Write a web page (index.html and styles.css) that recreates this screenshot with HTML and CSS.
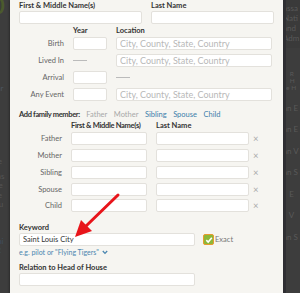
FILE: index.html
```html
<!DOCTYPE html>
<html>
<head>
<meta charset="utf-8">
<link rel="stylesheet" href="styles.css">
</head>
<body>
<div class="page">
  <div class="side side-left">
    <div class="bg-left">
      <div class="big">0</div>
      <div class="bl l1">Sear</div>
      <div class="bl l2 u">ists</div>
      <div class="bl l3">s Fe</div>
      <div class="bl l4">n ins</div>
      <div class="bl">ame</div>
      <div class="bl">s Fe</div>
      <div class="bl">rsuu</div>
      <div class="bl">, ea</div>
      <div class="bl">.</div>
      <div class="bl l10 blue">e thi</div>
      <div class="bl blue">al R</div>
    </div>
  </div>
  <div class="modal">
    <div class="name-row">
      <div class="field">
        <label class="lbl">First &amp; Middle Name(s)</label>
        <input class="inp w-name" type="text">
      </div>
      <div class="field">
        <label class="lbl">Last Name</label>
        <input class="inp w-name" type="text">
      </div>
    </div>

    <div class="events">
      <div></div><div class="colh">Year</div><div class="colh">Location</div>
      <div class="rl">Birth</div><input class="inp w-year" type="text"><input class="inp w-loc" type="text" placeholder="City, County, State, Country">
      <div class="rl">Lived In</div><div class="dash"></div><input class="inp w-loc" type="text" placeholder="City, County, State, Country">
      <div class="rl">Arrival</div><input class="inp w-year" type="text"><div class="dash"></div>
      <div class="rl">Any Event</div><input class="inp w-year" type="text"><input class="inp w-loc" type="text" placeholder="City, County, State, Country">
    </div>

    <div class="addfam">
      <span class="lbl">Add family member:</span>
      <span class="fm off">Father</span>
      <span class="fm off">Mother</span>
      <span class="fm on">Sibling</span>
      <span class="fm on">Spouse</span>
      <span class="fm on">Child</span>
    </div>

    <div class="family">
      <div></div><div class="colh tight">First &amp; Middle Name(s)</div><div class="colh">Last Name</div><div></div>
      <div class="rl">Father</div><input class="inp" type="text"><input class="inp" type="text"><span class="x">×</span>
      <div class="rl">Mother</div><input class="inp" type="text"><input class="inp" type="text"><span class="x">×</span>
      <div class="rl">Sibling</div><input class="inp" type="text"><input class="inp" type="text"><span class="x">×</span>
      <div class="rl">Spouse</div><input class="inp" type="text"><input class="inp" type="text"><span class="x">×</span>
      <div class="rl">Child</div><input class="inp" type="text"><input class="inp" type="text"><span class="x">×</span>
    </div>

    <div class="kw">
      <label class="lbl">Keyword</label>
      <div class="kw-row">
        <input class="inp w-kw" type="text" value="Saint Louis City">
        <span class="chk"><svg width="8" height="8" viewBox="0 0 8 8"><path d="M1.3 4.2 L3.2 6 L6.8 1.8" fill="none" stroke="#fff" stroke-width="1.6"/></svg></span>
        <span class="exact">Exact</span>
      </div>
      <div class="hint">e.g. pilot or "Flying Tigers" <svg width="6" height="5" viewBox="0 0 6 5"><path d="M0.8 1 L3 3.4 L5.2 1" fill="none" stroke="#4a86b0" stroke-width="1.3"/></svg></div>
    </div>

    <div class="rel">
      <label class="lbl">Relation to Head of House</label>
      <input class="inp w-kw" type="text">
    </div>

    <svg class="arrow" width="60" height="60" viewBox="0 0 60 60">
      <path d="M50 4 L17 36" stroke="#e8141a" stroke-width="3" stroke-linecap="round"/>
      <path d="M7 46 L13 29 L24 40 Z" fill="#e8141a"/>
    </svg>
  </div>
  <div class="side side-right">
    <div class="bg-right">
      <div class="topblock">
        <div class="br">assa</div>
        <div class="br">Nati</div>
        <div class="br">and</div>
        <div class="br">Adm</div>
      </div>
      <div class="hdr">
        <div class="hr">&nbsp;&nbsp;&nbsp;&nbsp;R</div>
        <div class="hr">&nbsp;&nbsp;&nbsp;&nbsp;H</div>
        <div class="hr">ce H</div>
      </div>
      <div class="br rr">an E</div>
      <div class="br rr">an E</div>
      <div class="br rr">an V</div>
      <div class="br rr">an S</div>
      <div class="br rr">&nbsp;&nbsp;&nbsp;E</div>
      <div class="br rr">&nbsp;&nbsp;&nbsp;V</div>
      <div class="br rr">an S</div>
    </div>
  </div>
</div>
</body>
</html>
```

FILE: styles.css
```css
* { box-sizing: border-box; }
html, body { margin: 0; padding: 0; }
body {
  width: 300px;
  height: 293px;
  overflow: hidden;
  background: #3c3c3c;
  font-family: Lato, "Liberation Sans", sans-serif;
}
.page {
  display: flex;
  height: 293px;
}
.side {
  overflow: hidden;
  background: #3d3d3d;
  color: #5a5a5a;
  font-size: 8px;
}
.side-left { width: 10px; flex: none; }
.side-right { width: 17px; flex: none; border-left: 3px solid #2f2f33; }
.bg-left {
  margin-left: -12px;
  width: 40px;
}
.big {
  font-size: 22px;
  line-height: 16px;
  color: #4b5a2d;
  font-weight: bold;
  margin-left: 4px;
  margin-top: -2px;
}
.bl { line-height: 9.5px; white-space: nowrap; color: #555; }
.bl.blue { color: #3f4d5c; }
.u { text-decoration: underline; color: #44505b; }
.l1 { margin-top: 70px; color: #4c5560; }
.l2 { margin-top: 28px; }
.l3 { margin-top: 26px; }
.l4 { margin-top: 5px; }
.l10 { margin-top: 8px; }
.bg-right { margin-left: -3px; white-space: nowrap; }
.topblock { background: #3a3a3a; padding-top: 3px; height: 48px; }
.br { line-height: 10px; color: #595959; }
.hdr { margin-top: 22px; font-size: 6.5px; }
.hr { line-height: 7px; color: #595959; }
.rr { margin-top: 11.5px; }

.modal {
  width: 273px;
  flex: none;
  background: #f6f5f1;
  padding: 1px 0 0 9px;
  position: relative;
  color: #333;
  box-shadow: -1px 0 2px rgba(0,0,0,0.3);
}
.lbl {
  display: block;
  font-weight: bold;
  font-size: 7.5px;
  line-height: 10px;
  color: #333;
  white-space: nowrap;
}
.inp {
  display: block;
  height: 13px;
  margin: 0;
  border: 1px solid #e3e1dc;
  border-radius: 2px;
  background: #fff;
  font-family: inherit;
  font-size: 7.5px;
  padding: 0 3px;
  color: #333;
  outline: none;
}
.inp::placeholder { color: #b8b8b8; }
.name-row { display: flex; gap: 9px; }
.w-name { width: 123px; }
.events {
  display: grid;
  grid-template-columns: 45px 34px 156px;
  column-gap: 9px;
  row-gap: 4px;
  margin-top: 2px;
  align-items: center;
}
.events .colh { margin-bottom: -3px; }
.colh {
  font-weight: bold;
  font-size: 7.5px;
  line-height: 10px;
  color: #333;
  white-space: nowrap;
}
.colh.tight { letter-spacing: -0.3px; }
.rl {
  text-align: right;
  font-size: 7.5px;
  color: #666;
  line-height: 13px;
}
.dash {
  width: 14px;
  height: 1px;
  background: #bbb;
}
.w-year { width: 34px; }
.w-loc { width: 156px; font-size: 9px; padding-left: 3px; }
.addfam {
  display: flex;
  align-items: baseline;
  margin-top: 9px;
  gap: 6.5px;
  font-size: 7.5px;
}
.addfam .lbl { display: inline; margin-right: 0; letter-spacing: -0.35px; }
.fm.off { color: #a8a8a8; }
.fm.on { color: #3d80ab; }
.family {
  display: grid;
  grid-template-columns: 43px 76px 93px 8px;
  column-gap: 9px;
  row-gap: 3.9px;
  margin-top: 1px;
  align-items: center;
}
.family .colh { margin-bottom: -3px; }
.family .inp { width: 100%; }
.x {
  color: #aaa;
  font-size: 9.5px;
  line-height: 13px;
  margin-left: -5px;
}
.kw { margin-top: 11px; }
.kw-row { display: flex; align-items: center; }
.w-kw { width: 176px; }
.chk {
  width: 11px;
  height: 11px;
  margin-left: 8px;
  background: #8db838;
  border: 1px solid #e79a2e;
  border-radius: 2px;
  display: flex;
  align-items: center;
  justify-content: center;
}
.exact { font-size: 7.5px; color: #777; margin-left: 1px; }
.hint {
  font-size: 7px;
  color: #4a86b0;
  line-height: 10px;
  margin-top: 1px;
  display: flex;
  align-items: center;
  gap: 3px;
}
.rel { margin-top: 6px; }
.arrow {
  position: absolute;
  left: 58px;
  top: 191px;
}
```
